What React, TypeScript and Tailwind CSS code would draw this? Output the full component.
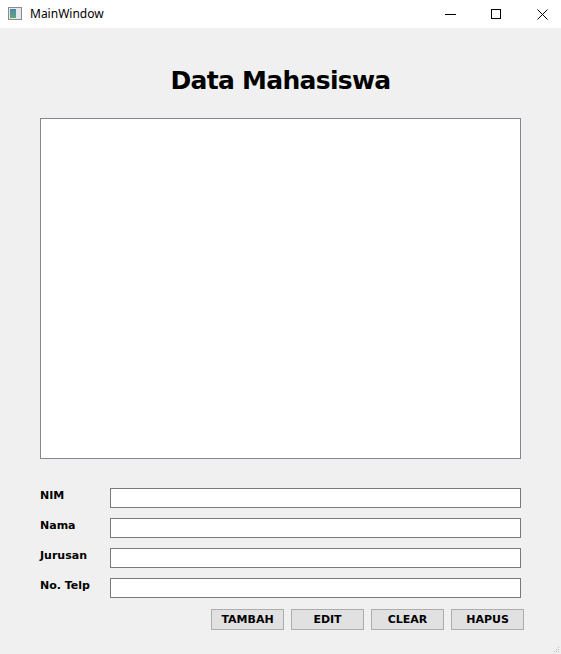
import React from 'react'

const fields = ['NIM', 'Nama', 'Jurusan', 'No. Telp']
const buttons = ['TAMBAH', 'EDIT', 'CLEAR', 'HAPUS']

const App = () => {
  return (
    <div className="w-[561px] h-[654px] bg-[#f0f0f0] flex flex-col overflow-hidden relative">
      {/* title bar */}
      <div className="h-[28px] bg-white flex items-center">
        <div className="ml-[8px] -mt-[2px] w-[14px] h-[13px] border border-[#8a8a8a] bg-[#e4e8ec] flex p-px">
          <div className="w-[6px] h-full bg-gradient-to-b from-[#4a86a8] to-[#63a873]" />
        </div>
        <span className="ml-[8px] text-[12px] text-black font-['Noto_Sans',sans-serif]">MainWindow</span>
        <div className="ml-auto -mr-[4px] flex items-center h-full">
          <div className="w-[46px] h-full flex items-center justify-center">
            <div className="w-[11px] h-px bg-black" />
          </div>
          <div className="w-[46px] h-full flex items-center justify-center">
            <div className="w-[10px] h-[10px] border border-black" />
          </div>
          <div className="w-[46px] h-full flex items-center justify-center">
            <svg width="11" height="11" viewBox="0 0 11 11">
              <path d="M0.5 0.5 L10.5 10.5 M10.5 0.5 L0.5 10.5" stroke="black" strokeWidth="1" />
            </svg>
          </div>
        </div>
      </div>

      <div className="flex flex-col px-[40px] font-['DejaVu_Sans',sans-serif]">
        <h1 className="mt-[33px] h-[40px] text-center text-[25px] font-bold tracking-[-0.7px] text-black leading-[40px]">
          Data Mahasiswa
        </h1>
        <div className="mt-[17px] w-[481px] h-[341px] bg-white border border-[#828790]" />

        <div className="mt-[29px] flex flex-col gap-[10px] w-[481px]">
          {fields.map((f) => (
            <div key={f} className="flex items-center h-[20px]">
              <span className="w-[70px] text-[11px] font-bold text-black -mt-[4px]">{f}</span>
              <div className="flex-1 h-[20px] bg-white border border-[#7a7a7a]" />
            </div>
          ))}
        </div>

        <div className="mt-[11px] flex gap-[7px] pl-[171px]">
          {buttons.map((b) => (
            <div
              key={b}
              className="shrink-0 w-[73px] h-[21px] pt-[2px] bg-[#e1e1e1] border border-[#adadad] flex items-center justify-center text-[11px] font-bold text-black"
            >
              {b}
            </div>
          ))}
        </div>
      </div>

      <svg className="absolute right-[1px] bottom-[1px]" width="6" height="6" viewBox="0 0 6 6">
        <rect x="4" y="0" width="1" height="1" fill="#bdbdbd" />
        <rect x="2" y="2" width="1" height="1" fill="#bdbdbd" />
        <rect x="4" y="2" width="1" height="1" fill="#bdbdbd" />
        <rect x="0" y="4" width="1" height="1" fill="#bdbdbd" />
        <rect x="2" y="4" width="1" height="1" fill="#bdbdbd" />
        <rect x="4" y="4" width="1" height="1" fill="#bdbdbd" />
      </svg>
    </div>
  )
}

export default App
